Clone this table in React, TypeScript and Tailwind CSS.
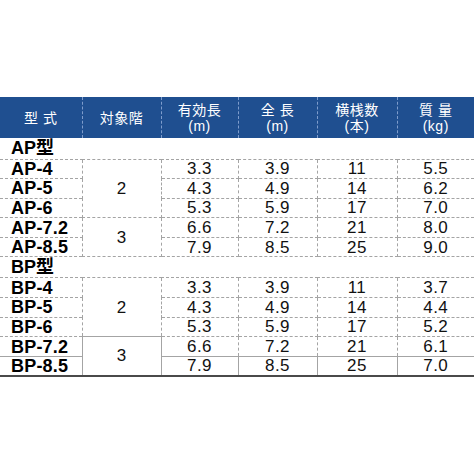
const font = { fontFamily: '"Liberation Sans", "Noto Sans CJK JP", sans-serif' };

type Row = { name: string; vals: string[] };

const ap: Row[] = [
  { name: "AP-4", vals: ["3.3", "3.9", "11", "5.5"] },
  { name: "AP-5", vals: ["4.3", "4.9", "14", "6.2"] },
  { name: "AP-6", vals: ["5.3", "5.9", "17", "7.0"] },
  { name: "AP-7.2", vals: ["6.6", "7.2", "21", "8.0"] },
  { name: "AP-8.5", vals: ["7.9", "8.5", "25", "9.0"] },
];

const bp: Row[] = [
  { name: "BP-4", vals: ["3.3", "3.9", "11", "3.7"] },
  { name: "BP-5", vals: ["4.3", "4.9", "14", "4.4"] },
  { name: "BP-6", vals: ["5.3", "5.9", "17", "5.2"] },
  { name: "BP-7.2", vals: ["6.6", "7.2", "21", "6.1"] },
  { name: "BP-8.5", vals: ["7.9", "8.5", "25", "7.0"] },
];

const headers = [
  ["型 式"],
  ["対象階"],
  ["有効長", "(m)"],
  ["全 長", "(m)"],
  ["横桟数", "(本)"],
  ["質 量", "(kg)"],
];

const cell = "border border-dashed border-[#a4a4a4] p-0";
const bottom = "border-b-2 border-b-[#4a4a4a] border-solid";

function Group({ label, rows, last }: { label: string; rows: Row[]; last?: boolean }) {
  return (
    <>
      <tr className="h-[21px]">
        <td
          colSpan={6}
          className="border-b border-dashed border-[#a4a4a4] pl-[11px] text-[18px] font-bold leading-none text-black"
        >
          {label}
        </td>
      </tr>
      {rows.map((r, i) => {
        const isLast = last && i === rows.length - 1;
        return (
          <tr key={r.name} className="h-[19.6px]">
            <td
              className={`${cell} border-l-0 pl-[11px] text-[18px] font-bold leading-none tracking-[0.2px] text-black ${
                isLast ? bottom : ""
              }`}
            >
              {r.name}
            </td>
            {i === 0 && (
              <td rowSpan={3} className={`${cell} text-center text-[17px] text-[#111]`}>
                2
              </td>
            )}
            {i === 3 && (
              <td
                rowSpan={2}
                className={`${cell} text-center text-[17px] text-[#111] ${last ? bottom : ""}`}
              >
                3
              </td>
            )}
            {r.vals.map((v, j) => (
              <td
                key={j}
                className={`${cell} ${j === 3 ? "border-r-0" : ""} text-center text-[17px] leading-none tracking-[0.5px] text-[#111] ${
                  isLast ? bottom : ""
                }`}
              >
                {v}
              </td>
            ))}
          </tr>
        );
      })}
    </>
  );
}

export default function App() {
  return (
    <div className="h-[474px] w-[474px] bg-white pt-[97px]" style={font}>
      <table className="w-[474px] table-fixed border-collapse">
        <colgroup>
          <col className="w-[82px]" />
          <col className="w-[79px]" />
          <col className="w-[77px]" />
          <col className="w-[79px]" />
          <col className="w-[80px]" />
          <col className="w-[77px]" />
        </colgroup>
        <thead>
          <tr className="h-[41px] bg-[#1f4f90]">
            {headers.map((h, i) => (
              <th
                key={i}
                className={`p-0 text-center text-[14px] font-normal leading-[16px] tracking-[0.5px] text-white ${
                  i > 0 ? "border-l border-dashed border-l-[#7e9ccc]" : ""
                }`}
              >
                {h.map((line) => (
                  <div key={line}>{line}</div>
                ))}
              </th>
            ))}
          </tr>
        </thead>
        <tbody>
          <Group label="AP型" rows={ap} />
          <Group label="BP型" rows={bp} last />
        </tbody>
      </table>
    </div>
  );
}
